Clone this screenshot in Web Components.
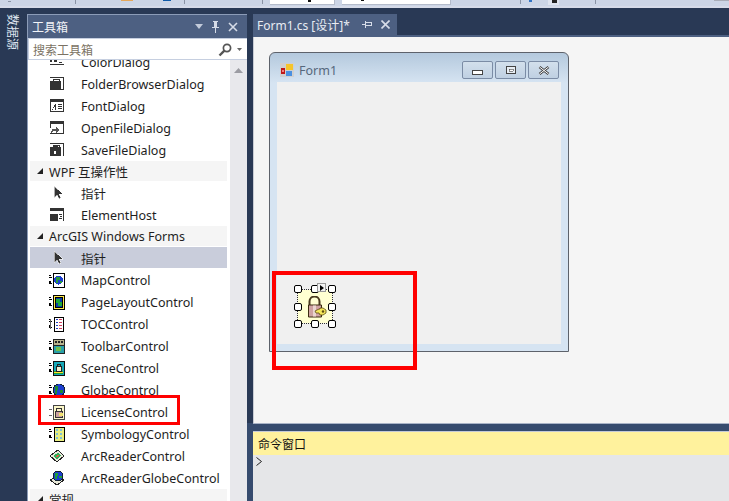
<!DOCTYPE html>
<html>
<head>
<meta charset="utf-8">
<title>Form1</title>
<style>
  html, body { margin: 0; height: 100%; overflow: hidden; background: #293955; }
  body { font: 12px "Noto Sans", "Noto Sans CJK SC", sans-serif; }
</style>
</head>
<body>

<vs-app>
  <vs-toolstrip slot="strip"></vs-toolstrip>
  <vs-rail slot="rail">数据源</vs-rail>
  <vs-toolbox slot="toolbox">
    <tb-row icon="color">ColorDialog</tb-row>
    <tb-row icon="folder">FolderBrowserDialog</tb-row>
    <tb-row icon="font">FontDialog</tb-row>
    <tb-row icon="open">OpenFileDialog</tb-row>
    <tb-row icon="save">SaveFileDialog</tb-row>
    <tb-group>WPF 互操作性</tb-group>
    <tb-row icon="pointer">指针</tb-row>
    <tb-row icon="host">ElementHost</tb-row>
    <tb-group>ArcGIS Windows Forms</tb-group>
    <tb-row icon="pointer" selected>指针</tb-row>
    <tb-row icon="map">MapControl</tb-row>
    <tb-row icon="page">PageLayoutControl</tb-row>
    <tb-row icon="toc">TOCControl</tb-row>
    <tb-row icon="toolbar">ToolbarControl</tb-row>
    <tb-row icon="scene">SceneControl</tb-row>
    <tb-row icon="globe">GlobeControl</tb-row>
    <tb-row icon="license">LicenseControl</tb-row>
    <tb-row icon="symbology">SymbologyControl</tb-row>
    <tb-row icon="reader">ArcReaderControl</tb-row>
    <tb-row icon="readerglobe">ArcReaderGlobeControl</tb-row>
    <tb-group>常规</tb-group>
  </vs-toolbox>
  <vs-tab slot="tab">Form1.cs [设计]*</vs-tab>
  <vs-designer slot="designer">
    <win-form caption="Form1">
      <sel-control></sel-control>
    </win-form>
  </vs-designer>
  <cmd-window slot="cmd">命令窗口</cmd-window>
</vs-app>

<script>
// small helper, every element below does the same thing in its constructor
function shadow(el, html) {
  el.attachShadow({ mode: 'open' }).innerHTML = html;
}

class VsApp extends HTMLElement {
  constructor() {
    super();
    shadow(this, `
      <style>
        :host { display: flex; flex-direction: column; height: 501px; width: 729px; position: relative; overflow: hidden; background: #293955; }
        .body { flex: 1; display: flex; min-height: 0; }
        .main { flex: 1; display: flex; flex-direction: column; margin-left: 6px; padding-top: 6px; min-width: 0; }
        .tabs { display: flex; height: 21px; border-bottom: 2px solid #4d6082; }
        .split { height: 7px; background: #364b6e; border-top: 1px solid #a9b3c7; border-bottom: 1px solid #c5cbd8; box-shadow: -6px 0 0 #364b6e; }
        .mark { position: absolute; border: 3px solid #f00; box-sizing: border-box; pointer-events: none; }
      </style>
      <slot name="strip"></slot>
      <div class="body">
        <slot name="rail"></slot>
        <slot name="toolbox"></slot>
        <div class="main">
          <div class="tabs"><slot name="tab"></slot></div>
          <slot name="designer"></slot>
          <div class="split"></div>
          <slot name="cmd"></slot>
        </div>
      </div>
      <div class="mark" style="left:38px;top:395px;width:142px;height:30px"></div>
      <div class="mark" style="left:272px;top:271px;width:145px;height:99px;border-width:4px"></div>
    `);
  }
}

class VsToolstrip extends HTMLElement {
  constructor() {
    super();
    shadow(this, `
      <style>
        :host { display: flex; height: 8px; flex: none; background: #ccd5e6; border-bottom: 2px solid #d6dbe9; box-sizing: border-box; overflow: hidden; align-items: flex-start; position: relative; }
        i { position: absolute; top: 0; display: block; }
        .sep { width: 1px; height: 4px; background: #8a93a5; }
        .box { height: 4px; background: #fff; border-right: 1px solid #b5bccb; border-bottom: 1px solid #b5bccb; }
      </style>
      <i style="left:8px;width:3px;height:1px;top:1px;background:#8a93a5"></i>
      <i class="sep" style="left:75px"></i>
      <i style="left:121px;width:12px;height:1px;background:#e5a75a"></i>
      <i style="left:163px;width:8px;height:1px;background:#0f5aa8"></i>
      <i class="sep" style="left:184px"></i>
      <i class="sep" style="left:262px"></i>
      <i class="box" style="left:270px;width:64px"></i>
      <i style="left:308px;width:3px;height:2px;background:#111"></i>
      <i class="box" style="left:342px;width:108px"></i>
      <i style="left:361px;width:3px;height:1px;background:#111"></i>
      <i class="sep" style="left:520px"></i>
      <i style="left:529px;width:3px;height:2px;background:#3273c4"></i>
      <i style="left:548px;width:11px;height:5px;background:#dfe4ef"></i>
      <i style="left:552px;width:5px;height:3px;background:#222"></i>
      <i class="sep" style="left:595px"></i>
      <i style="left:714px;width:15px;height:1px;background:#a9adb8"></i>
    `);
  }
}

class VsRail extends HTMLElement {
  constructor() {
    super();
    shadow(this, `
      <style>
        :host { display: block; width: 27px; flex: none; box-sizing: border-box; padding: 6px 0 0 6px; color: #dfe5f0; font-size: 12px; line-height: 12px; }
        div { writing-mode: vertical-rl; text-orientation: sideways; }
      </style>
      <div><slot></slot></div>
    `);
  }
}

class VsToolbox extends HTMLElement {
  constructor() {
    super();
    shadow(this, `
      <style>
        :host { display: flex; flex-direction: column; width: 220px; flex: none; margin-top: 6px; box-sizing: border-box; border: 1px solid #8c9cb8; border-right: none; border-bottom: none; background: #fff; overflow: hidden; }
        .title { height: 23px; flex: none; display: flex; align-items: center; gap: 8px; padding: 0 9px 0 4px; background: #4d6082; color: #f2f4f8; font-size: 12px; }
        .title span { flex: 1; }
        .search { height: 20px; flex: none; display: flex; align-items: center; margin: 1px 0 1px 1px; padding: 1px 4px 0; box-sizing: border-box; background: #fff; box-shadow: 0 0 0 1px #c6cfe0; color: #7b7263; font-size: 12px; }
        .search span { flex: 1; }
        .body { flex: 1; display: flex; min-height: 0; }
        .list { flex: 1; padding: 0 3px 0 2px; overflow: hidden; min-width: 0; }
        .inner { margin-top: -9px; display: flex; flex-direction: column; }
        .bar { width: 17px; flex: none; background: #e8e8ec; display: flex; justify-content: center; padding-top: 8px; box-sizing: border-box; }
        svg { display: block; flex: none; }
      </style>
      <div class="title">
        <span>工具箱</span>
        <svg width="8" height="5"><path d="M0 0h8L4 5z" fill="#c3cbdb"/></svg>
        <svg width="9" height="12" shape-rendering="crispEdges"><path d="M2 0h5v1H6v5h2v1H5v5H4V7H1V6h2V1H2z" fill="#d6dce8"/></svg>
        <svg width="10" height="10"><path d="M1 1l8 8M9 1L1 9" stroke="#d6dce8" stroke-width="1.6"/></svg>
      </div>
      <div class="search">
        <span>搜索工具箱</span>
        <svg width="14" height="14"><circle cx="9" cy="5" r="3.6" fill="none" stroke="#555" stroke-width="1.7"/><path d="M6.4 7.6L1.5 12.5" stroke="#555" stroke-width="2.4"/></svg>
        <svg width="5" height="3" style="margin:0 1px 0 5px"><path d="M0 0h5L2.5 3z" fill="#666"/></svg>
      </div>
      <div class="body">
        <div class="list"><div class="inner"><slot></slot></div></div>
        <div class="bar"><svg width="9" height="5"><path d="M4.5 0L9 5H0z" fill="#9c9ca3"/></svg></div>
      </div>
    `);
  }
}

class TbGroup extends HTMLElement {
  constructor() {
    super();
    shadow(this, `
      <style>
        :host { display: flex; align-items: center; height: 20px; margin-bottom: 1px; background: #f5f5f5; color: #1e1e1e; padding-left: 7px; flex: none; white-space: nowrap; font-size: 12.5px; }
        svg { margin-right: 6px; flex: none; }
      </style>
      <svg width="6" height="6"><path d="M6 0v6H0z" fill="#222"/></svg><slot></slot>
    `);
  }
}

// pin stubs shared by the ArcGIS control icons
const PINS = '<path d="M0 5h3M0 11h3" stroke="#000"/><path d="M0 3h2v1H0zM0 9h2v3H0z" fill="#000"/>';

const ICONS = {
  color: '<path d="M1 1h3v2H1zM6 1h2v2H6zM10 1h5v1h-1v2h-1V2h-3zM1 5h2v3H1zM5 5h3v3H5zM1 10h14v1H1zM10 8h3v1h-3z" fill="#333"/>',
  folder: '<path d="M1 1h14v13H1v-1h13V2H1z" fill="#333"/><path d="M1 5h3V3h7v2h1v8H1z" fill="#333"/><path d="M5 4h5v1H5z" fill="#fff"/>',
  font: '<path d="M1 1h14v13H1zM2 4v9h12V4z" fill="#333"/><path d="M3 12l3-6h1v6H6V9H5l-1 3zM9 6h4v1H9zM9 8h4v1H9zM9 10h4v1H9z" fill="#333"/>',
  open: '<path d="M1 1h14v13H1v-1h13V4H2v4H1z" fill="#333"/><path d="M2 12c0-3 3-4 5-3V7l3 3-3 3v-2c-2-1-3 0-4 2H2z" fill="#555"/>',
  save: '<path d="M1 1h14v13h-1V2H1z" fill="#333"/><path d="M1 5h3V3h7v2h1v9H1zM5 9v3h2V9z" fill="#333"/><path d="M9 4h1v1H9z" fill="#fff"/>',
  host: '<path d="M1 1h14v13h-1V4H1z" fill="#333"/><path d="M1 7h8v7H1zM10 7h3v1h-3zM11 9h2v1h-2zM10 11h3v1h-3z" fill="#333"/>',
  pointer: '<path d="M5 1v12l3-3 2 4 2-1-2-4h4z" fill="#333" stroke="#fff" stroke-width=".6"/>',
  map: PINS + '<path d="M4 1h11v14H4z" fill="#fff" stroke="#000"/><circle cx="9.5" cy="8" r="4.5" fill="#1c3fd0"/><path d="M7 5h4v3H9v3H7zM11 9h2v2h-2z" fill="#2a9a3c"/>',
  page: PINS + '<path d="M4 1h11v14H4z" fill="#ffe94a" stroke="#000"/><path d="M6 3h7v10H6z" fill="#0a3fa8"/><path d="M7 5h4v3h2v4H9V9H7z" fill="#1aa83c"/><path d="M6 3h7v10H6z" fill="none" stroke="#000"/>',
  toc: PINS + '<path d="M5 1h9v14H5z" fill="#fff" stroke="#000"/><path d="M7 3h2v1H7zM7 6h2v1H7zM7 9h2v1H7zM7 12h2v1H7z" fill="#2040c0"/><path d="M10 3h3v1h-3zM10 6h3v1h-3zM10 9h3v1h-3zM10 12h3v1h-3z" fill="#d04060"/><path d="M1 3h1v10H1z" fill="#666"/>',
  toolbar: PINS + '<path d="M4 1h11v14H4z" fill="#2aa0a8" stroke="#222"/><path d="M4 1h11v6H4z" fill="#b8b48e" stroke="#222"/><path d="M6 3h2v2H6zM9 3h2v2H9zM12 3h2v2h-2z" fill="#222"/><path d="M7 9h5v4H7z" fill="#6fbf4a"/>',
  scene: PINS + '<path d="M4 1h11v14H4z" fill="#17a8b8" stroke="#111"/><path d="M5 11h9v3H5z" fill="#27a02c"/><path d="M5 12h9v1H5z" fill="#ffe030"/><path d="M7 6h5v5H7z" fill="#f2efd2" stroke="#222"/><path d="M8 6V4h3v2" fill="none" stroke="#222"/>',
  globe: PINS + '<circle cx="10" cy="8" r="6" fill="#1c3fd0" stroke="#123"/><path d="M6 4h4v4H8v4H6zM11 8h3v3h-3z" fill="#1f8a33"/><path d="M9 2h2v12H9z" fill="#1c3fd0"/>',
  license: '<path d="M0 5h3M0 11h3" stroke="#666"/><path d="M4 1h11v14H4z" fill="#fbf7c8" stroke="#444"/><path d="M6 7h7v6H6z" fill="#caa0a0" stroke="#333"/><path d="M7 7V4h5v3" fill="none" stroke="#333"/><path d="M10 9h4v3h-4z" fill="#efe070"/>',
  symbology: PINS + '<path d="M5 1h10v14H5z" fill="#e9ee80" stroke="#000"/><path d="M7 3h2v2H7zM11 3h2v2h-2zM7 7h2v2H7zM11 7h2v2h-2zM7 11h2v2H7zM11 11h2v2h-2z" fill="#7fc0d8"/>',
  reader: '<path d="M1 8l8-6 6 6-7 6z" fill="#e8e8d8" stroke="#222"/><path d="M4 8l5-3 3 3-4 3z" fill="#2fb05a"/><path d="M6 8l3-1 1 1-2 1z" fill="#f05040"/>',
  readerglobe: '<path d="M1 10l7-4 7 4-7 5z" fill="#e8e8d8" stroke="#222"/><circle cx="9" cy="6" r="5" fill="#1c3fd0" stroke="#123"/><path d="M6 3h3v3H8v3H6zM10 6h3v2h-3z" fill="#1fa03a"/>'
};

class TbRow extends HTMLElement {
  constructor() {
    super();
    const icon = ICONS[this.getAttribute('icon')] || '';
    shadow(this, `
      <style>
        :host { display: flex; align-items: center; height: 22px; padding-left: 19px; color: #1e1e1e; flex: none; white-space: nowrap; font-size: 12.5px; }
        :host([selected]) { background: linear-gradient(#c9cddb 21px, transparent 21px); }
        svg { width: 16px; height: 16px; margin-right: 16px; flex: none; }
      </style>
      <svg viewBox="0 0 16 16" shape-rendering="crispEdges">${icon}</svg><slot></slot>
    `);
  }
}

class VsTab extends HTMLElement {
  constructor() {
    super();
    shadow(this, `
      <style>
        :host { display: flex; align-items: center; width: 144px; box-sizing: border-box; padding: 0 7px 0 4px; background: #4d6082; color: #e8ecf3; white-space: nowrap; }
        span { flex: 1; }
        svg { display: block; flex: none; }
      </style>
      <span><slot></slot></span>
      <svg width="10" height="9" style="margin-right:9px" shape-rendering="crispEdges"><path d="M0 4h3M3 1h1v7H3zM4 2h6v1H4zM4 5h6v1H4zM9 2h1v4H9z" stroke="none" fill="#d6dce8"/><path d="M0 4h3v1H0z" fill="#d6dce8"/></svg>
      <svg width="9" height="9"><path d="M.5.5l8 8M8.5.5l-8 8" stroke="#d6dce8" stroke-width="1.6"/></svg>
    `);
  }
}

class VsDesigner extends HTMLElement {
  constructor() {
    super();
    shadow(this, `
      <style>
        :host { display: block; flex: 1; min-height: 0; box-sizing: border-box; padding: 15px 0 0 16px; background: #f5f5f5; border-left: 1px solid #c8ccd4; }
      </style>
      <slot></slot>
    `);
  }
}

class WinForm extends HTMLElement {
  constructor() {
    super();
    const caption = this.getAttribute('caption') || '';
    shadow(this, `
      <style>
        :host { display: flex; flex-direction: column; width: 300px; height: 300px; box-sizing: border-box; margin-left: -1px; border: 1px solid #5d626b; border-radius: 6px 6px 0 0; background: linear-gradient(#b4c9dd, #d6e4f2 30px); }
        .cap { height: 29px; flex: none; box-sizing: border-box; display: flex; align-items: center; padding: 5px 9px 0 10px; color: #56677c; font-size: 12.5px; }
        .cap span { flex: 1; margin-left: 5px; }
        .btn { width: 31px; height: 18px; box-sizing: border-box; margin-left: 2px; border: 1px solid #7b8ca5; border-radius: 2px; background: linear-gradient(#d3e0ec, #bfd0e2); display: flex; align-items: center; justify-content: center; }
        .client { flex: 1; margin: 0 7px 7px; background: #f0f0f0; position: relative; }
        svg { display: block; flex: none; }
      </style>
      <div class="cap">
        <svg width="14" height="14" shape-rendering="crispEdges"><path d="M0 0h14v14H0z" fill="#d0d0d0"/><path d="M6 1h7v6H6z" fill="#f5c52c"/><path d="M1 5h4v6H1z" fill="#c01818"/><path d="M6 8h6v5H6z" fill="#4a90e0"/><path d="M2 7h2v2H2z" fill="#f08080"/></svg>
        <span>${caption}</span>
        <div class="btn"><svg width="11" height="5" style="margin-top:5px" shape-rendering="crispEdges"><path d="M.5.5h10v4H.5z" fill="#fff" stroke="#444"/></svg></div>
        <div class="btn"><svg width="10" height="8" shape-rendering="crispEdges"><path d="M.5.5h9v7h-9z" fill="#e8eef4" stroke="#444"/><path d="M3 3h4v2H3z" fill="#fff" stroke="#444" stroke-width=".6"/></svg></div>
        <div class="btn"><svg width="12" height="9"><path d="M1.5 1l9 7M10.5 1l-9 7" stroke="#444" stroke-width="2.6"/><path d="M1.5 1l9 7M10.5 1l-9 7" stroke="#fff" stroke-width="1"/></svg></div>
      </div>
      <div class="client"><slot></slot></div>
    `);
  }
}

class SelControl extends HTMLElement {
  constructor() {
    super();
    // handles and the smart tag sit on top of the free design surface
    const spots = [[0,0],[17,0],[34,0],[0,18],[34,18],[0,35],[17,35],[34,35]];
    const handles = spots.map(p => `<b style="left:${p[0]}px;top:${p[1]}px"></b>`).join('');
    shadow(this, `
      <style>
        :host { position: absolute; left: 17px; top: 203px; width: 42px; height: 43px; display: block; }
        .box { position: absolute; left: 4px; top: 5px; width: 34px; height: 33px; box-sizing: border-box; outline: 1px dotted #333; outline-offset: 0; background: #ffffd2; display: flex; align-items: center; justify-content: center; }
        b { position: absolute; width: 8px; height: 8px; box-sizing: border-box; border: 1px solid #000; border-radius: 2px; background: #fff; }
        .tag { position: absolute; left: 23px; top: -2px; width: 9px; height: 9px; box-sizing: border-box; border: 1px solid #999; background: #f2f2f2; z-index: 1; }
        .tag svg { display: block; margin: 1px 0 0 2px; }
      </style>
      <div class="box">
        <svg width="20" height="22" viewBox="0 0 20 22" style="margin-left:4px"><path d="M2.5 9V5.5a5 5 0 0 1 10 0V9" fill="none" stroke="#4a3a20" stroke-width="2"/><path d="M1.5 9h13v12h-13z" fill="#cfa3a3" stroke="#3a2a10"/><path d="M6 9.5h3v11H6z" fill="#ead5d0"/><path d="M8 15l4-2h1v-1h3l3 2v3l-3 2h-3l-1-2H9z" fill="#f5e75a" stroke="#5a4a10" stroke-width=".8"/><circle cx="16" cy="15.5" r="1.2" fill="#5a4a10"/></svg>
      </div>
      ${handles}
      <div class="tag"><svg width="4" height="6"><path d="M0 0l4 3-4 3z" fill="#000"/></svg></div>
    `);
  }
}

class CmdWindow extends HTMLElement {
  constructor() {
    super();
    shadow(this, `
      <style>
        :host { display: block; height: 69px; flex: none; background: #e5e6e8; box-shadow: -6px 0 0 #364b6e; color: #111; }
        .head { height: 23px; background: #fff29d; display: flex; align-items: center; padding-left: 5px; }
        svg { display: block; margin: 2px 0 0 3px; }
      </style>
      <div class="head"><slot></slot></div>
      <svg width="6" height="9"><path d="M.5.5l5 4-5 4" fill="none" stroke="#222"/></svg>
    `);
  }
}

customElements.define('vs-app', VsApp);
customElements.define('vs-toolstrip', VsToolstrip);
customElements.define('vs-rail', VsRail);
customElements.define('vs-toolbox', VsToolbox);
customElements.define('tb-group', TbGroup);
customElements.define('tb-row', TbRow);
customElements.define('vs-tab', VsTab);
customElements.define('vs-designer', VsDesigner);
customElements.define('win-form', WinForm);
customElements.define('sel-control', SelControl);
customElements.define('cmd-window', CmdWindow);
</script>
</body>
</html>
